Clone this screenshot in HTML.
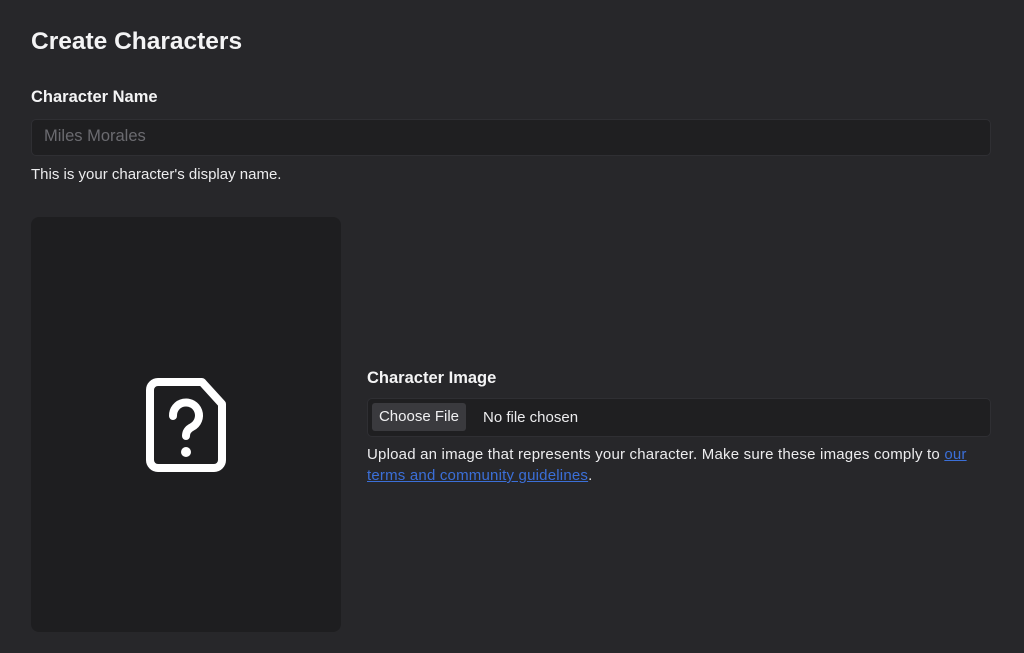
<!DOCTYPE html>
<html><head><style>
body{margin:0;width:1024px;height:653px;background:#27272a;font-family:"Liberation Sans",sans-serif;color:#f4f4f5;overflow:hidden;position:relative}
.a{position:absolute}
h1{position:absolute;left:31px;top:28px;margin:0;font-size:24.5px;font-weight:bold}
.lbl{font-size:16.5px;font-weight:bold}
.inp{background:#1f1f21;border:1px solid #2f2f33;border-radius:5px}
.t{font-size:15px;color:#ececee}
</style></head><body>
<h1>Create Characters</h1>
<div class="a lbl" style="left:31px;top:88px">Character Name</div>
<div class="a inp" style="left:31px;top:119px;width:958px;height:35px"></div>
<div class="a" style="left:44px;top:127px;font-size:16.5px;color:#6b6b70">Miles Morales</div>
<div class="a t" style="left:31px;top:166px">This is your character's display name.</div>
<div class="a" style="left:31px;top:217px;width:310px;height:415px;background:#1e1e20;border-radius:8px"></div>
<svg class="a" style="left:146px;top:376px" width="82" height="98" viewBox="0 0 82 98">
<path d="M12 6 H56 L76 28 V84 a8 8 0 0 1 -8 8 H12 a8 8 0 0 1 -8 -8 V14 a8 8 0 0 1 8 -8 Z" fill="none" stroke="#fff" stroke-width="8" stroke-linejoin="round"/>
<path d="M27 40 a13 13 0 1 1 19 11 c-4 2 -6 5 -6 9" fill="none" stroke="#fff" stroke-width="8" stroke-linecap="round"/>
<circle cx="40" cy="76" r="5" fill="#fff"/>
</svg>
<div class="a lbl" style="left:367px;top:369px">Character Image</div>
<div class="a inp" style="left:367px;top:398px;width:622px;height:37px"></div>
<div class="a" style="left:372px;top:403px;width:94px;height:28px;background:#3a3a3e;border-radius:3px;font-size:15px;line-height:28px;text-align:center;color:#f0f0f2">Choose File</div>
<div class="a t" style="left:483px;top:409px">No file chosen</div>
<div class="a t" style="left:367px;top:444px;width:610px;line-height:21px;letter-spacing:0.2px">Upload an image that represents your character. Make sure these images comply to <span style="color:#3b6fd8;text-decoration:underline">our terms and community guidelines</span>.</div>
</body></html>
